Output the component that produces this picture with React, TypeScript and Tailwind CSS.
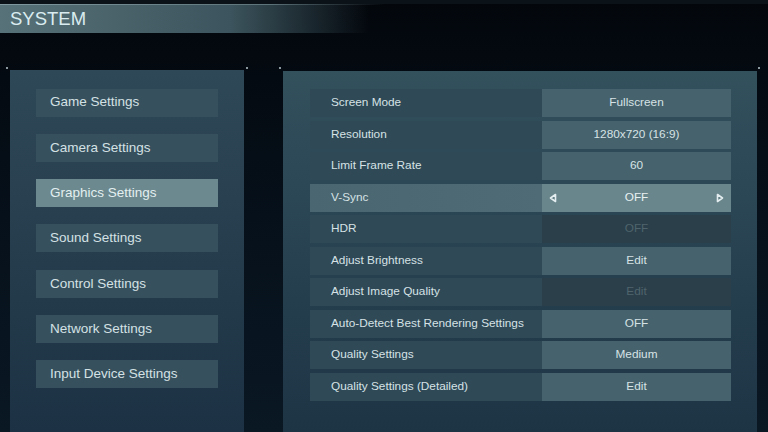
import React from 'react';

const menu = [
  'Game Settings',
  'Camera Settings',
  'Graphics Settings',
  'Sound Settings',
  'Control Settings',
  'Network Settings',
  'Input Device Settings',
];

type Row = { label: string; value: string; state?: 'active' | 'disabled'; arrows?: boolean };

const rows: Row[] = [
  { label: 'Screen Mode', value: 'Fullscreen' },
  { label: 'Resolution', value: '1280x720 (16:9)' },
  { label: 'Limit Frame Rate', value: '60' },
  { label: 'V-Sync', value: 'OFF', state: 'active', arrows: true },
  { label: 'HDR', value: 'OFF', state: 'disabled' },
  { label: 'Adjust Brightness', value: 'Edit' },
  { label: 'Adjust Image Quality', value: 'Edit', state: 'disabled' },
  { label: 'Auto-Detect Best Rendering Settings', value: 'OFF' },
  { label: 'Quality Settings', value: 'Medium' },
  { label: 'Quality Settings (Detailed)', value: 'Edit' },
];

function Arrow({ dir }: { dir: 'left' | 'right' }) {
  return (
    <svg width="8" height="10" viewBox="0 0 8 10" className="shrink-0">
      <polygon
        points={dir === 'left' ? '6.5,1.5 1.5,5 6.5,8.5' : '1.5,1.5 6.5,5 1.5,8.5'}
        fill="#5d7a82"
        stroke="#e4eef0"
        strokeWidth="1.6"
        strokeLinejoin="round"
      />
    </svg>
  );
}

function Dot() {
  return <div className="h-[2px] w-[2px] rounded-full bg-[#b9c9cd]" />;
}

function SettingRow({ row }: { row: Row }) {
  const active = row.state === 'active';
  const disabled = row.state === 'disabled';
  return (
    <div className="flex h-[28px] text-[11.8px] text-[#d6e2e5]">
      <div
        className={
          active
            ? 'flex w-[232px] items-center bg-gradient-to-r from-[#4a6671] to-[#4f6b75] pl-[21px]'
            : 'flex w-[232px] items-center bg-[#2f4957] pl-[21px]'
        }
      >
        {row.label}
      </div>
      <div
        className={
          active
            ? 'flex flex-1 items-center justify-between bg-[#6a868d] px-[7px] text-[#e8f1f2]'
            : disabled
              ? 'flex flex-1 items-center justify-center bg-[#2b3f4a] text-[#4f646c]'
              : 'flex flex-1 items-center justify-center bg-[#46626d]'
        }
      >
        {row.arrows && <Arrow dir="left" />}
        <span>{row.value}</span>
        {row.arrows && <Arrow dir="right" />}
      </div>
    </div>
  );
}

export default function App() {
  return (
    <div
      className="relative h-[432px] w-[768px] overflow-hidden bg-gradient-to-b from-[#03070c] via-[#06101a] to-[#0a1824]"
      style={{ fontFamily: '"Liberation Sans", Arial, sans-serif' }}
    >
      {/* header band */}
      <div className="h-[4px] bg-[#0b1218]" />
      <div className="h-px bg-gradient-to-r from-[#8098a0] via-[#5d747b] via-35% to-transparent to-50%" />
      <div className="h-[28px] bg-gradient-to-r from-[#587279] via-[#3c545d] via-30% to-transparent to-48% pl-[10px]">
        <div className="flex h-full items-center text-[18.5px] leading-none text-[#d9ecef]">SYSTEM</div>
      </div>

      {/* corner dots */}
      <div className="absolute left-[6px] top-[67px]"><Dot /></div>
      <div className="absolute left-[246px] top-[67px]"><Dot /></div>
      <div className="absolute left-[279px] top-[67px]"><Dot /></div>
      <div className="absolute left-[758px] top-[67px]"><Dot /></div>

      <div className="flex pt-[37px] pl-[10px]">
        {/* left menu panel */}
        <div className="flex h-[362px] w-[234px] flex-col gap-[17.3px] bg-gradient-to-b from-[#2f4857] to-[#1c3244] pl-[26px] pt-[18.5px]">
          {menu.map((m) => (
            <div
              key={m}
              className={
                m === 'Graphics Settings'
                  ? 'flex h-[28px] w-[182px] items-center bg-[#6c898f] pl-[14px] text-[13.5px] text-[#e3eff0]'
                  : 'flex h-[28px] w-[182px] items-center bg-[#36505e] pl-[14px] text-[13.5px] text-[#d4e1e4]'
              }
            >
              {m}
            </div>
          ))}
        </div>

        {/* right settings panel */}
        <div className="ml-[39px] mt-[1px] flex h-[361px] w-[474px] flex-col gap-[3.5px] bg-gradient-to-b from-[#33505d] to-[#1d3445] pl-[27px] pr-[26px] pt-[18px]">
          {rows.map((r) => (
            <SettingRow key={r.label} row={r} />
          ))}
        </div>
      </div>
    </div>
  );
}
